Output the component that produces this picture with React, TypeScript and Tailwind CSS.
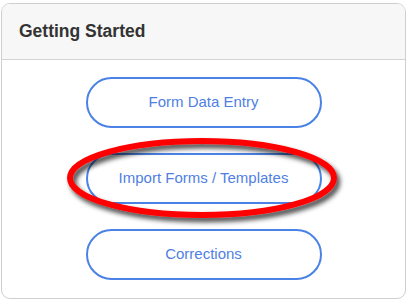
import React from 'react';

const ITEMS = ['Form Data Entry', 'Import Forms / Templates', 'Corrections'];

export default function App() {
  return (
    <div className="w-[411px] h-[302px] bg-white pt-[3px] pl-[1px]" style={{ fontFamily: '"Liberation Sans", Arial, sans-serif' }}>
      <div className="relative w-[405px] h-[296px] border border-[#cfcfcf] rounded-[9px] overflow-hidden bg-white">
        <div className="h-[56px] bg-[#f7f7f7] border-b border-[#d4d4d4] flex items-center px-[17px]">
          <h2 className="text-[17.5px] font-bold text-[#333]">Getting Started</h2>
        </div>
        <div className="flex flex-col items-center pt-[17px] gap-[25px]">
          {ITEMS.map(label => (
            <button
              key={label}
              className="w-[236px] h-[51px] rounded-full border-2 border-[#4a82e6] text-[#4f7fe3] text-[15px] bg-white"
            >
              {label}
            </button>
          ))}
        </div>
        <svg className="absolute left-0 top-0 pointer-events-none" width="405" height="296" viewBox="0 0 405 296">
          <defs>
            <filter id="sh" x="-20%" y="-50%" width="140%" height="200%">
              <feDropShadow dx="3" dy="4" stdDeviation="2.5" floodColor="#000" floodOpacity="0.75" />
            </filter>
          </defs>
          <ellipse cx="200" cy="174" rx="132" ry="37" fill="none" stroke="#ff0000" strokeWidth="6" filter="url(#sh)" />
        </svg>
      </div>
    </div>
  );
}
